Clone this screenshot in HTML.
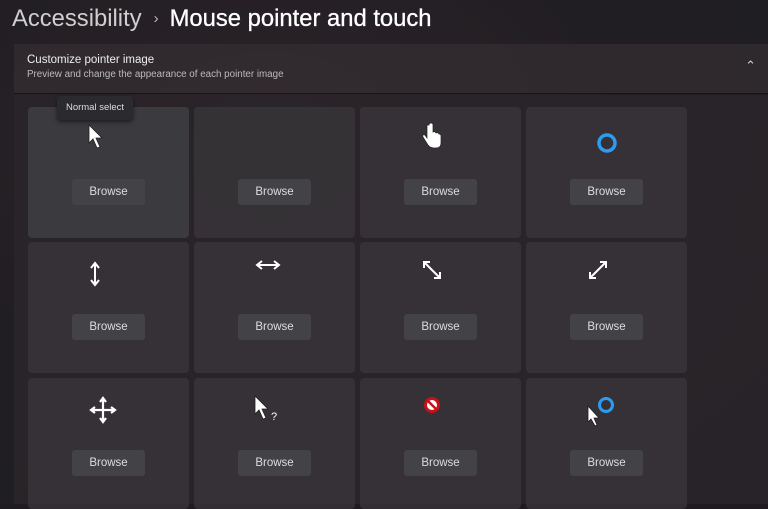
<!DOCTYPE html>
<html><head><meta charset="utf-8"><style>
*{margin:0;padding:0;box-sizing:border-box}
body{width:768px;height:504px;overflow:hidden;background:#1e1c21;font-family:"Liberation Sans",sans-serif;position:relative}
.bg{position:absolute;inset:0;background:radial-gradient(ellipse at 35% 30%,#2c2429 0%,#211e23 50%,#1d1d22 100%)}
.t{position:absolute;top:5px;left:12px;font-size:23.8px;color:#cfcfcf;white-space:nowrap}
.t b{font-weight:normal;color:#fff;-webkit-text-stroke:.3px #fff}
.t i{font-style:normal;font-size:15px;color:#bbb;margin:0 11px 0 12px;position:relative;top:-3px}
.hdr{position:absolute;left:14px;top:44px;width:754px;height:50px;background:rgba(52,45,50,.75);border-bottom:1px solid #161518}
.hdr .a{position:absolute;left:13px;top:10px;font-size:11.5px;color:#eee}
.hdr .b{position:absolute;left:13px;top:25px;font-size:9.8px;color:#bbb}
.hdr .c{position:absolute;right:12px;top:14px;font-size:13px;color:#ccc}
.body{position:absolute;left:14px;top:95px;width:754px;height:409px;background:rgba(42,38,43,.8)}
.tile{position:absolute;width:161px;height:131px;background:rgba(58,55,60,.7);border-radius:4px}
.tile.h{background:#3b3a3e}
.btn{position:absolute;left:44px;top:72px;width:73px;height:26px;background:#434247;border-radius:3px;color:#ddd;font-size:11.5px;text-align:center;line-height:26px}
.ic{position:absolute;left:0;top:0}
.tip{position:absolute;left:57px;top:96px;width:76px;height:24px;background:#2b2a2e;border-radius:4px;color:#ddd;font-size:9.5px;line-height:24px;text-align:center;box-shadow:0 2px 4px rgba(0,0,0,.5)}
</style></head><body>
<div class="bg"></div>
<div class="t">Accessibility<i>›</i><b>Mouse pointer and touch</b></div>
<div class="hdr"><div class="a">Customize pointer image</div><div class="b">Preview and change the appearance of each pointer image</div><div class="c">⌃</div></div>
<div class="body"></div>

<div class="tile h" style="left:28px;top:107px"><svg class="ic" width="161" height="60"><path d="M61 18 L61 36 L65 32 L69 41 L72 40 L68 31 L74 31 Z" fill="#fff" stroke="#222" stroke-width=".8"/></svg><div class="btn">Browse</div></div>
<div class="tile" style="left:194px;top:107px"><div class="btn">Browse</div></div>
<div class="tile" style="left:360px;top:107px"><svg class="ic" width="161" height="60"><path d="M67 18 v13 l-2 -3 q-3 -1 -2 2 l5 8 q2 3 6 3 h2 q5 0 5 -5 v-7 q0 -2 -2 -2 q-1-2 -3-1 q-1-2 -3-1 v-7 q0-2 -2-2 q-2 0-2 2z" fill="#fff" stroke="#222" stroke-width=".7"/></svg><div class="btn">Browse</div></div>
<div class="tile" style="left:526px;top:107px"><svg class="ic" width="161" height="60"><circle cx="81" cy="36" r="8" fill="none" stroke="#2b9cf0" stroke-width="3.5"/></svg><div class="btn">Browse</div></div>

<div class="tile" style="left:28px;top:242px"><svg class="ic" width="161" height="60"><path d="M67 22 v20 M63 26 l4-5 4 5 M63 38 l4 5 4-5" stroke="#fff" stroke-width="2" fill="none"/></svg><div class="btn">Browse</div></div>
<div class="tile" style="left:194px;top:242px"><svg class="ic" width="161" height="60"><path d="M64 23 h20 M68 19 l-5 4 5 4 M80 19 l5 4 -5 4" stroke="#fff" stroke-width="2" fill="none"/></svg><div class="btn">Browse</div></div>
<div class="tile" style="left:360px;top:242px"><svg class="ic" width="161" height="60"><path d="M64 20 l16 16 M64 26 v-6 h6 M80 30 v6 h-6" stroke="#fff" stroke-width="2" fill="none"/></svg><div class="btn">Browse</div></div>
<div class="tile" style="left:526px;top:242px"><svg class="ic" width="161" height="60"><path d="M64 36 l16 -16 M64 30 v6 h6 M74 20 h6 v6" stroke="#fff" stroke-width="2" fill="none"/></svg><div class="btn">Browse</div></div>

<div class="tile" style="left:28px;top:378px"><svg class="ic" width="161" height="60"><path d="M75 21 v22 M64 32 h22 M72 24 l3-4 3 4 M72 40 l3 4 3-4 M67 29 l-4 3 4 3 M83 29 l4 3 -4 3" stroke="#fff" stroke-width="2.2" fill="none"/></svg><div class="btn">Browse</div></div>
<div class="tile" style="left:194px;top:378px"><svg class="ic" width="161" height="60"><path d="M61 18 L61 36 L65 32 L69 41 L72 40 L68 31 L74 31 Z" fill="#fff" stroke="#222" stroke-width=".8"/><text x="77" y="42" fill="#fff" font-size="11" font-family="Liberation Sans">?</text></svg><div class="btn">Browse</div></div>
<div class="tile" style="left:360px;top:378px"><svg class="ic" width="161" height="60"><circle cx="72" cy="27" r="8" fill="#c8101a"/><circle cx="72" cy="27" r="5" fill="#fff"/><path d="M68 23 l8 8" stroke="#c8101a" stroke-width="2.5"/></svg><div class="btn">Browse</div></div>
<div class="tile" style="left:526px;top:378px"><svg class="ic" width="161" height="60"><circle cx="80" cy="27" r="6.5" fill="none" stroke="#2b9cf0" stroke-width="3"/><path d="M62 28 L62 44 L65 41 L69 48 L71 47 L68 40 L73 40 Z" fill="#fff" stroke="#222" stroke-width=".8"/></svg><div class="btn">Browse</div></div>

<div class="tip">Normal select</div>
</body></html>
